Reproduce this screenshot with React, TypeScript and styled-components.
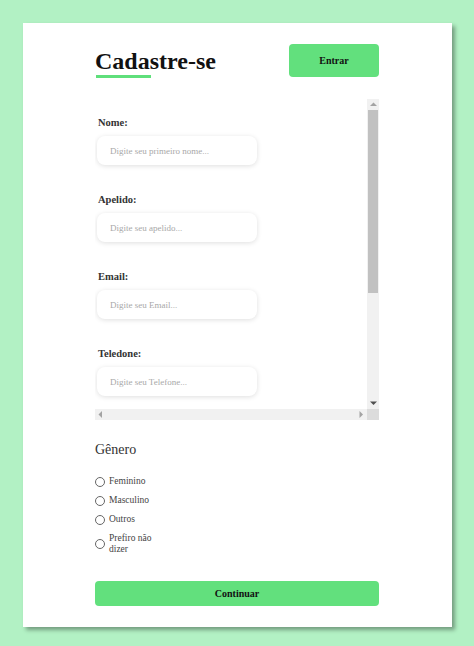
import React from "react";
import styled, { createGlobalStyle } from "styled-components";

const GlobalStyle = createGlobalStyle`
  * {
    box-sizing: border-box;
  }
  html, body {
    margin: 0;
    background-color: #b2f1c4;
  }
  body {
    padding: 23px 22px 19px 23px;
    font-family: "Liberation Serif", "DejaVu Serif", serif;
  }
`;

const Card = styled.div`
  background-color: #fff;
  display: flex;
  flex-direction: column;
  padding: 21px 73px 21px 72px;
  box-shadow: 3px 3px 4px rgba(0, 0, 0, 0.35);
`;

const Header = styled.div`
  display: flex;
  justify-content: space-between;
  align-items: flex-start;
`;

const TitleBlock = styled.div`
  display: flex;
  flex-direction: column;
  padding-top: 3px;
`;

const Title = styled.h1`
  margin: 0;
  font-size: 24px;
  line-height: 28px;
  font-weight: 700;
  color: #111;
`;

const Underline = styled.div`
  width: 55px;
  height: 3px;
  margin-left: 1px;
  background-color: #5fdf7b;
`;

const GreenButton = styled.button<{ $full?: boolean }>`
  border: none;
  border-radius: 4px;
  background-color: #62e07d;
  color: #111;
  font-family: "Liberation Serif", "DejaVu Serif", serif;
  font-weight: 700;
  font-size: 10px;
  width: ${({ $full }) => ($full ? "100%" : "90px")};
  height: ${({ $full }) => ($full ? "25px" : "33px")};
  cursor: pointer;
`;

/* scroll frame: content + drawn scrollbars */
const ScrollFrame = styled.div`
  margin-top: 21px;
  height: 321px;
  display: grid;
  grid-template-columns: 1fr 12px;
  grid-template-rows: 1fr 11px;
`;

const ScrollContent = styled.div`
  overflow: hidden;
  padding: 17px 0 0 2px;
`;

const VBar = styled.div`
  display: flex;
  flex-direction: column;
  background-color: #f1f1f1;
`;

const HBar = styled.div`
  display: flex;
  align-items: center;
  justify-content: space-between;
  background-color: #f1f1f1;
`;

const Corner = styled.div`
  background-color: #dcdcdc;
`;

const ArrowBox = styled.div<{ $h?: boolean }>`
  display: flex;
  align-items: center;
  justify-content: center;
  width: ${({ $h }) => ($h ? "11px" : "12px")};
  height: 11px;
  flex: 0 0 auto;
`;

const Track = styled.div`
  flex: 1;
  padding: 0 1px;
`;

const Thumb = styled.div`
  height: 183px;
  background-color: #c1c1c1;
`;

const Arrow = ({ dir, color }: { dir: "up" | "down" | "left" | "right"; color: string }) => {
  const pts = {
    up: "0,4 3.5,0.5 7,4",
    down: "0,0.5 3.5,4 7,0.5",
    left: "4,0 0.5,3.5 4,7",
    right: "0.5,0 4,3.5 0.5,7",
  }[dir];
  const vertical = dir === "up" || dir === "down";
  return (
    <svg width={vertical ? 7 : 5} height={vertical ? 5 : 7} viewBox={vertical ? "0 0 7 5" : "0 0 5 7"}>
      <polygon points={pts} fill={color} />
    </svg>
  );
};

const Field = styled.div`
  display: flex;
  flex-direction: column;
  gap: 6px;
  margin-bottom: 28px;
`;

const Label = styled.label`
  font-size: 10.5px;
  line-height: 14px;
  font-weight: 700;
  color: #333;
  padding-left: 1px;
`;

const Input = styled.input`
  width: 160px;
  height: 29px;
  border: none;
  border-radius: 8px;
  padding: 0 13px;
  font-family: "Liberation Serif", "DejaVu Serif", serif;
  font-size: 9px;
  color: #333;
  background-color: #fff;
  box-shadow: 0 1px 5px rgba(0, 0, 0, 0.13);
  outline: none;

  &::placeholder {
    color: #a8a8a8;
  }
`;

const SectionTitle = styled.h2`
  margin: 21px 0 0;
  font-size: 14px;
  line-height: 18px;
  font-weight: 400;
  color: #333;
`;

const RadioList = styled.div`
  display: flex;
  flex-direction: column;
  gap: 8px;
  margin-top: 17px;
`;

const RadioRow = styled.label`
  display: flex;
  align-items: center;
  gap: 4px;
  font-size: 9.5px;
  line-height: 11px;
  color: #444;
`;

const RadioInput = styled.input`
  appearance: none;
  margin: 0;
  flex: 0 0 auto;
  width: 10px;
  height: 10px;
  border: 1px solid #666;
  border-radius: 50%;
  background-color: #fff;
`;

const RadioText = styled.span`
  max-width: 50px;
`;

const Footer = styled.div`
  margin-top: 26px;
`;

const fields = [
  { label: "Nome:", placeholder: "Digite seu primeiro nome..." },
  { label: "Apelido:", placeholder: "Digite seu apelido..." },
  { label: "Email:", placeholder: "Digite seu Email..." },
  { label: "Teledone:", placeholder: "Digite seu Telefone..." },
  { label: "Senha:", placeholder: "Digite sua senha..." },
  { label: "Confirme a senha:", placeholder: "Digite sua senha novamente..." },
];

const genders = ["Feminino", "Masculino", "Outros", "Prefiro não dizer"];

const App = () => {
  return (
    <>
      <GlobalStyle />
      <Card>
        <Header>
          <TitleBlock>
            <Title>Cadastre-se</Title>
            <Underline />
          </TitleBlock>
          <GreenButton>Entrar</GreenButton>
        </Header>
        <ScrollFrame>
          <ScrollContent>
            {fields.map((f) => (
              <Field key={f.label}>
                <Label>{f.label}</Label>
                <Input placeholder={f.placeholder} />
              </Field>
            ))}
          </ScrollContent>
          <VBar>
            <ArrowBox>
              <Arrow dir="up" color="#a3a3a3" />
            </ArrowBox>
            <Track>
              <Thumb />
            </Track>
            <ArrowBox>
              <Arrow dir="down" color="#505050" />
            </ArrowBox>
          </VBar>
          <HBar>
            <ArrowBox $h>
              <Arrow dir="left" color="#a3a3a3" />
            </ArrowBox>
            <ArrowBox $h>
              <Arrow dir="right" color="#a3a3a3" />
            </ArrowBox>
          </HBar>
          <Corner />
        </ScrollFrame>
        <SectionTitle>Gênero</SectionTitle>
        <RadioList>
          {genders.map((g) => (
            <RadioRow key={g}>
              <RadioInput type="radio" name="genero" />
              <RadioText>{g}</RadioText>
            </RadioRow>
          ))}
        </RadioList>
        <Footer>
          <GreenButton $full>Continuar</GreenButton>
        </Footer>
      </Card>
    </>
  );
};

export default App;
